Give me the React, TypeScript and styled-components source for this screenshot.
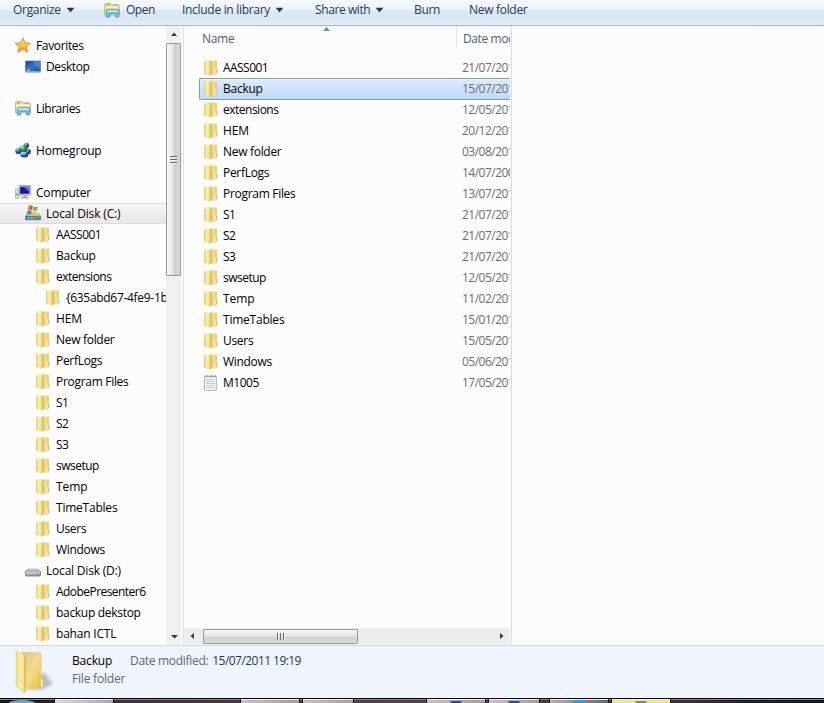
import React from "react";
import styled, { createGlobalStyle } from "styled-components";

const Global = createGlobalStyle`
  * { box-sizing: border-box; }
  body { margin: 0; overflow: hidden; }
  svg { display: block; flex: none; }
`;

const Window = styled.div`
  width: 824px;
  height: 703px;
  display: flex;
  flex-direction: column;
  background: #fcfcfc;
  font: 12px "Open Sans", "Noto Sans", sans-serif;
  color: #000;
  overflow: hidden;
`;

const Toolbar = styled.header`
  height: 26px;
  flex: none;
  display: flex;
  align-items: center;
  padding: 0 0 5px 13px;
  background: linear-gradient(#f6fafe 0, #e9f2fb 10px, #dce7f5 11px, #dce7f5 20px, #e6eff9 25px);
  border-bottom: 1px solid #a2b5cf;
  color: #1e395b;
`;

const Command = styled.button<{ $width: number }>`
  width: ${(p) => p.$width}px;
  height: 20px;
  padding: 0;
  border: 0;
  background: none;
  display: flex;
  align-items: center;
  gap: 5px;
  color: inherit;
  font: inherit;
  flex: none;
`;

const Text = styled.span<{ $track?: number }>`
  white-space: pre;
  line-height: 18px;
  letter-spacing: ${(p) => p.$track ?? -0.3}px;
`;

const Main = styled.main`
  height: 619px;
  flex: none;
  display: grid;
  grid-template-columns: 166px 17px 329px 1fr;
`;

const Tree = styled.nav`
  padding-top: 9px;
  overflow: hidden;
`;

const TreeRow = styled.div<{ $indent: number; $active?: boolean }>`
  height: 21px;
  display: flex;
  align-items: center;
  gap: ${(p) => (p.$indent > 30 ? 5 : 4)}px;
  padding-left: ${(p) => p.$indent}px;
  overflow: hidden;
  ${(p) =>
    p.$active
      ? "background: linear-gradient(#f7f7f7, #e7e7e7); box-shadow: inset 0 1px #dadddc, inset 0 -1px #dcdcdc;"
      : ""}
`;

const VScroll = styled.div`
  display: flex;
  flex-direction: column;
  justify-content: space-between;
  align-items: center;
  background: #f0f0f0;
  border-right: 2px solid #fafafa;
  padding: 5px 0 5px;
`;

const VThumb = styled.div`
  width: 15px;
  height: 233px;
  margin-top: 4px;
  border: 1px solid #989898;
  border-radius: 1px;
  background: linear-gradient(90deg, #f7f7f7, #e7e7e7 45%, #cdcdce 60%, #dadadc);
  display: flex;
  align-items: center;
  justify-content: center;
`;

const Group = styled.div`
  display: flex;
  flex-direction: column;
  align-items: center;
`;

const FilePane = styled.section`
  border-left: 1px solid #d9e3ee;
  border-right: 1px solid #d0dded;
  padding-right: 1px;
  display: flex;
  flex-direction: column;
  overflow: hidden;
`;

const Header = styled.div`
  height: 31px;
  display: grid;
  grid-template-columns: 272px 1fr;
  color: #4c607a;
`;

const HeadCell = styled.div<{ $pad: number }>`
  position: relative;
  height: 22px;
  padding: 4px 0 0 ${(p) => p.$pad}px;
  white-space: nowrap;
  overflow: hidden;
  & + & { border-left: 1px solid #e0e6f0; }
`;

const SortMark = styled.svg`
  position: absolute;
  left: 138px;
  top: 1px;
`;

const FileRow = styled.div<{ $active?: boolean }>`
  height: 21px;
  margin-left: 15px;
  padding-left: ${(p) => (p.$active ? 3 : 4)}px;
  display: grid;
  grid-template-columns: 20px 239px 1fr;
  align-items: center;
  overflow: hidden;
  ${(p) =>
    p.$active
      ? "height: 22px; margin-bottom: -1px; border: 1px solid #7b9ebe; border-right: 0; border-radius: 2px 0 0 2px; background: linear-gradient(#deebfc, #bfd9f9); box-shadow: inset 0 1px #edf5ff;"
      : ""}
`;

const DateText = styled(Text)`
  color: #6d6d6d;
  overflow: hidden;
`;

const HScroll = styled.div`
  margin-top: auto;
  height: 17px;
  padding: 1px 5px;
  background: #ededed;
  border-bottom: 1px solid #f4f4f4;
  display: flex;
  align-items: center;
  justify-content: space-between;
`;

const HThumb = styled.div`
  width: 155px;
  height: 15px;
  margin-left: 6px;
  border: 1px solid #989898;
  border-radius: 1px;
  background: linear-gradient(#f5f5f5, #e8e8e8 45%, #d2d2d2 55%, #dadada);
  display: flex;
  align-items: center;
  justify-content: center;
`;

const ThumbArea = styled.div`
  display: flex;
  align-items: center;
`;

const Details = styled.footer`
  height: 53px;
  flex: none;
  display: flex;
  padding: 3px 0 0 14px;
  gap: 18px;
  background: #f0f4fc;
  border-top: 1px solid #cbdbea;
`;

const DetailText = styled.div`
  padding-top: 3px;
  color: #5a6779;
`;

const DetailLine = styled.div`
  display: flex;
  height: 18px;
`;

const Title = styled(Text)`
  width: 58px;
  color: #000;
`;

const Value = styled(Text)`
  margin-left: 4px;
  color: #1e395b;
`;

const Taskbar = styled.div`
  height: 5px;
  flex: none;
  display: flex;
  border-top: 1px solid #08050a;
  background: linear-gradient(90deg, #101820, #403038 120px, #54404a 400px, #3a2c34 700px, #222228 740px, #10171d);
  box-shadow: inset 0 1px #8d828a;
`;

const Task = styled.div<{ $gap: number; $width: number; $tint: string }>`
  width: ${(p) => p.$width}px;
  margin-left: ${(p) => p.$gap}px;
  background: ${(p) => p.$tint};
  border: 1px solid #1b1518;
  border-bottom: 0;
  border-top: 0;
  box-shadow: inset 0 1px #f3eef0;
  display: flex;
  justify-content: center;
  align-items: flex-end;
  flex: none;
`;

const StartOrb = styled.div`
  width: 26px;
  height: 3px;
  margin: 1px 0 0 9px;
  border-radius: 13px 13px 0 0 / 3px 3px 0 0;
  background: #6da6c4;
  flex: none;
`;

const Dot = styled.i<{ $color: string }>`
  width: 12px;
  height: 2px;
  border-radius: 6px 6px 0 0;
  background: ${(p) => p.$color};
`;

const FolderIcon = () => (
  <svg width="16" height="18" viewBox="0 0 16 18">
    <path d="M6.5 1.6H13q.8 0 .8.8v12.4q0 .6-.8.6H6.5z" fill="url(#foldBack)" />
    <path d="M1 1.8l1-.6h4.6l1.3 1v14.1l-1.2.5L1 15z" fill="url(#foldFront)" />
    <path d="M1.3 2.3l5.2.6" stroke="#fbf5cd" strokeWidth=".8" />
    <path d="M7.9 3v12.6" stroke="#cdb04a" strokeWidth=".8" />
    <path d="M12 9.3h1.8q.5 0 .5.6v4.4l-.8.6H12z" fill="#f4ecc0" />
    <path d="M13.8 9.8v4.4" stroke="#9fabab" strokeWidth=".9" />
  </svg>
);

const Defs = () => (
  <svg width="0" height="0">
    <defs>
      <linearGradient id="foldFront">
        <stop stopColor="#e3cd70" />
        <stop offset=".4" stopColor="#f8eeb2" />
        <stop offset=".75" stopColor="#f1e08f" />
        <stop offset="1" stopColor="#dfc45c" />
      </linearGradient>
      <linearGradient id="foldBack">
        <stop stopColor="#dcc257" />
        <stop offset=".6" stopColor="#f3e193" />
        <stop offset="1" stopColor="#ddc25a" />
      </linearGradient>
      <linearGradient id="starFill" x2="0" y2="1">
        <stop stopColor="#fff4a2" />
        <stop offset=".5" stopColor="#fdcb3b" />
        <stop offset="1" stopColor="#f08a18" />
      </linearGradient>
      <linearGradient id="screen" x2="1" y2="1">
        <stop stopColor="#174193" />
        <stop offset=".5" stopColor="#3278c7" />
        <stop offset="1" stopColor="#1b4e94" />
      </linearGradient>
      <linearGradient id="metal" x2="0" y2="1">
        <stop stopColor="#e6e9eb" />
        <stop offset="1" stopColor="#8e9498" />
      </linearGradient>
      <radialGradient id="ballBlue" cx=".35" cy=".25">
        <stop stopColor="#d6ebff" />
        <stop offset=".5" stopColor="#4a80d2" />
        <stop offset="1" stopColor="#20409c" />
      </radialGradient>
      <radialGradient id="ballGreen" cx=".35" cy=".25">
        <stop stopColor="#d5fac0" />
        <stop offset=".5" stopColor="#45b045" />
        <stop offset="1" stopColor="#1b7a2a" />
      </radialGradient>
      <linearGradient id="bigFront">
        <stop stopColor="#f4df83" />
        <stop offset=".7" stopColor="#fbeeaa" />
        <stop offset="1" stopColor="#e6c95f" />
      </linearGradient>
      <linearGradient id="bigBack" x2="1" y2="1">
        <stop stopColor="#d9c88e" />
        <stop offset=".5" stopColor="#f0dc8c" />
        <stop offset="1" stopColor="#e7bd33" />
      </linearGradient>
      <filter id="soft"><feGaussianBlur stdDeviation="1.8" /></filter>
    </defs>
  </svg>
);

const StarIcon = () => (
  <svg width="17" height="17" viewBox="0 0 17 17">
    <path d="M7.8.8l2 5.1 5.7.4-4.4 3.5 1.6 5.5-4.9-3.1-4.9 3.1 1.5-5.5L.1 6.3l5.6-.4z" fill="url(#starFill)" stroke="#df8430" strokeWidth=".9" />
  </svg>
);

const DesktopIcon = () => (
  <svg width="17" height="16" viewBox="0 0 17 16">
    <path d="M.6 2h14.8v11H.6z" fill="url(#screen)" stroke="#597a9d" strokeWidth=".8" />
    <path d="M8 2.5h7v7L12 8z" fill="#5595d4" opacity=".65" />
    <path d="M.5 13h15" stroke="#aec2ce" strokeWidth="1.3" />
    <path d="M1.5 12l3-3v3z" fill="#9ecfe9" />
  </svg>
);

const LibraryIcon = () => (
  <svg width="17" height="17" viewBox="0 0 17 17">
    <path d="M.5 13V2.5l1-1h5L8 2.7h6.5l1 1V13z" fill="#efdc88" stroke="#c8ae57" strokeWidth=".8" />
    <path d="M1.5 4h13v4h-13z" fill="#f8efb8" />
    <path d="M2 3h3" stroke="#69ad63" />
    <path d="M9 3.6h5" stroke="#9eb9c2" />
    <path d="M2.3 15V9q0-1.8 1.7-1.8h9q1.8 0 1.8 1.8v6h-3.2v-3.6H5.8V15z" fill="#6cc2eb" stroke="#3a8fbf" strokeWidth=".7" />
    <path d="M3.3 8.2h10.4v1.9H3.3z" fill="#bde8fa" />
  </svg>
);

const HomegroupIcon = () => (
  <svg width="17" height="17" viewBox="0 0 17 17">
    <circle cx="11.4" cy="3.4" r="2.7" fill="url(#ballBlue)" />
    <circle cx="3.4" cy="9" r="3.1" fill="url(#ballBlue)" />
    <circle cx="13" cy="9.6" r="2.9" fill="url(#ballBlue)" />
    <ellipse cx="9.4" cy="13" rx="4" ry="2.5" fill="url(#ballBlue)" />
    <circle cx="8.5" cy="7.2" r="3.8" fill="url(#ballGreen)" />
    <path d="M6 11q2.5-1.5 5.4 0" stroke="#c9e6e4" fill="none" />
  </svg>
);

const ComputerIcon = () => (
  <svg width="17" height="17" viewBox="0 0 17 17">
    <path d="M.6 5h2.8v9.4H.6z" fill="#dee8df" stroke="#93a196" strokeWidth=".7" />
    <path d="M1.3 9.5h1.3v2H1.3z" fill="#49ac4f" />
    <path d="M4 1.5h11.4v9.6H4z" fill="#d9dedf" stroke="#8c9598" strokeWidth=".8" />
    <path d="M5.1 2.7h9.2v7.1H5.1z" fill="#111ca0" />
    <path d="M8.5 2.7h5.8v5z" fill="#5276df" />
    <path d="M8.2 11h3.6v2H8.2zM6 13h7.8v1.6H6z" fill="#a9afb1" />
  </svg>
);

const DiskIcon = ({ system = false }: { system?: boolean }) => (
  <svg width="17" height="17" viewBox="0 0 17 17">
    <path d={system ? "M2.2 8.6h11.5l1.9 3.5H.4z" : "M2.8 7.2h10.4l2.2 3H.5z"} fill="#dfe3e5" stroke="#888e90" strokeWidth=".7" />
    <path d={system ? "M.4 11h15.2v3.8H.4z" : "M.5 9.8q0-.8.8-.8h13.4q.8 0 .8.8v3.4q0 .8-.8.8H1.3q-.8 0-.8-.8z"} fill={system ? "#5b8993" : "url(#metal)"} stroke="#636d70" strokeWidth=".7" />
    <path d="M12 11.8h2.2" stroke="#5cc846" strokeWidth="1.7" />
    {system && (
      <g>
        <path d="M2.5 13h7" stroke="#a3c5ca" />
        <path d="M3.7.9q2.4-1.2 4.2 0L7 5q-2-1.2-4.2 0z" fill="#e6602f" />
        <path d="M8.5 1.4q2 1.1 4.4 0L11.9 5.4q-2.2.9-4.3 0z" fill="#78b83b" />
        <path d="M2.6 5.8q2.2-1.2 4.2 0l-.9 4q-2-1.1-4.2 0z" fill="#4384d1" />
        <path d="M7.4 6.2q2 1 4.3 0l-.9 4q-2.2 1-4.3 0z" fill="#f4c33d" />
      </g>
    )}
  </svg>
);

const NoteIcon = () => (
  <svg width="16" height="18" viewBox="0 0 16 18">
    <path d="M1.5 2.5h11.9v13.8H1.5z" fill="#f5f7f8" stroke="#9ca4a9" strokeWidth=".8" />
    <path d="M3 5.5h9M3 7.5h9M3 9.5h9M3 11.5h9M3 13.5h9" stroke="#b6cbd6" strokeWidth=".9" />
    <path d="M2.7 1v2.4M4.7 1v2.4M6.7 1v2.4M8.7 1v2.4M10.7 1v2.4M12.4 1v2.4" stroke="#8a9296" strokeWidth=".8" />
  </svg>
);

const BigFolder = () => (
  <svg width="40" height="46" viewBox="0 0 40 46">
    <path d="M14 40l16-17 9 12-12 6z" fill="#9ca3ad" opacity=".65" filter="url(#soft)" />
    <path d="M8 3h18l2 1.8-1.2 33.4L12 41z" fill="url(#bigBack)" />
    <path d="M2 1.8l9 5V43l-1.5.6L3 37.6 2 36z" fill="url(#bigFront)" stroke="#deca7b" strokeWidth=".6" />
    <path d="M11 7v36" stroke="#caa83f" strokeWidth=".7" />
    <path d="M26 27q3.5-.5 3.5 2.5V37l-3 2z" fill="#ead27a" stroke="#c7a947" strokeWidth=".5" />
    <path d="M27.6 31v7" stroke="#fffbdc" strokeWidth="1.6" />
  </svg>
);

const Arrow = ({ d }: { d: string }) => (
  <svg width="8" height="8" viewBox="0 0 8 8"><path d={d} fill="#35383b" /></svg>
);

const Caret = () => (
  <svg width="9" height="6" viewBox="0 0 9 6"><path d="M.5.7h8L4.5 5.2z" fill="#1e395b" /></svg>
);

const Grip = ({ vertical = false }: { vertical?: boolean }) => (
  <svg width="9" height="9" viewBox="0 0 9 9">
    <path d={vertical ? "M1 1.5h7M1 4.5h7M1 7.5h7" : "M1.5 1v7M4.5 1v7M7.5 1v7"} stroke="#63666a" />
    <path d={vertical ? "M1 2.5h7M1 5.5h7M1 8.5h7" : "M2.5 1v7M5.5 1v7M8.5 1v7"} stroke="#f8f8f8" />
  </svg>
);

const tracking: Record<string, number> = {
  AASS001: -0.55,
  extensions: -0.5,
  Libraries: -0.5,
  Favorites: -0.35,
  Desktop: -0.4,
  AdobePresenter6: -0.55,
  Homegroup: -0.2,
  HEM: -0.15,
  Temp: -0.1,
  "Local Disk (C:)": -0.15,
  "Local Disk (D:)": -0.2,
  swsetup: -0.5,
  M1005: -0.5,
  S1: -0.6,
  S2: -0.6,
  S3: -0.6,
  TimeTables: -0.22,
  Backup: -0.25,
  Computer: -0.2,
  "bahan ICTL": -0.2,
};

type TreeItem = [string, number, React.ReactNode];
const folder = (name: string): TreeItem => [name, 35, <FolderIcon />];

const tree: (TreeItem | null)[] = [
  ["Favorites", 15, <StarIcon />],
  ["Desktop", 25, <DesktopIcon />],
  null,
  ["Libraries", 15, <LibraryIcon />],
  null,
  ["Homegroup", 15, <HomegroupIcon />],
  null,
  ["Computer", 15, <ComputerIcon />],
  ["Local Disk (C:)", 25, <DiskIcon system />],
  folder("AASS001"),
  folder("Backup"),
  folder("extensions"),
  ["{635abd67-4fe9-1b", 45, <FolderIcon />],
  ...["HEM", "New folder", "PerfLogs", "Program Files", "S1", "S2", "S3", "swsetup", "Temp", "TimeTables", "Users", "Windows"].map(folder),
  ["Local Disk (D:)", 25, <DiskIcon />],
  folder("AdobePresenter6"),
  folder("backup dekstop"),
  folder("bahan ICTL"),
];

const files: [string, string][] = [
  ["AASS001", "21/07/2011"],
  ["Backup", "15/07/2011"],
  ["extensions", "12/05/2011"],
  ["HEM", "20/12/2010"],
  ["New folder", "03/08/2011"],
  ["PerfLogs", "14/07/2009"],
  ["Program Files", "13/07/2011"],
  ["S1", "21/07/2011"],
  ["S2", "21/07/2011"],
  ["S3", "21/07/2011"],
  ["swsetup", "12/05/2011"],
  ["Temp", "11/02/2011"],
  ["TimeTables", "15/01/2011"],
  ["Users", "15/05/2011"],
  ["Windows", "05/06/2011"],
  ["M1005", "17/05/2011"],
];

const glass = "linear-gradient(90deg, #c9bfc4, #a79ba2)";
const tasks: [number, number, string, string?][] = [
  [19, 60, "linear-gradient(90deg, #dedada, #aaa4a7)"],
  [126, 60, glass],
  [2, 52, glass],
  [72, 60, glass, "#25548d"],
  [2, 52, glass, "#25548d"],
  [9, 60, "linear-gradient(90deg, #b0b1b2, #66676a)", "#18a2ed"],
  [2, 60, "#f2e583", "#8b8560"],
];

export default function App() {
  return (
    <Window>
      <Global />
      <Toolbar>
        <Command $width={91}><Text>Organize</Text><Caret /></Command>
        <Command $width={78}><LibraryIcon /><Text $track={-0.5}>Open</Text></Command>
        <Command $width={133}><Text>Include in library</Text><Caret /></Command>
        <Command $width={99}><Text $track={-0.4}>Share with</Text><Caret /></Command>
        <Command $width={55}><Text>Burn</Text></Command>
        <Command $width={70}><Text>New folder</Text></Command>
      </Toolbar>
      <Main>
        <Tree>
          {tree.map((item, i) =>
            item ? (
              <TreeRow key={i} $indent={item[1]} $active={item[0] === "Local Disk (C:)"}>
                {item[2]}
                <Text $track={tracking[item[0]]}>{item[0]}</Text>
              </TreeRow>
            ) : (
              <TreeRow key={i} $indent={0} />
            )
          )}
        </Tree>
        <VScroll>
          <Group>
            <Arrow d="M4 1.5L7 5H1z" />
            <VThumb><Grip vertical /></VThumb>
          </Group>
          <Arrow d="M1 3h7L4.5 6.5z" />
        </VScroll>
        <FilePane>
          <Header>
            <HeadCell $pad={18}>
              <Text>Name</Text>
              <SortMark width="9" height="5" viewBox="0 0 9 5"><path d="M4.5 0L8 4H1z" fill="#5c91ad" /></SortMark>
            </HeadCell>
            <HeadCell $pad={6}><Text $track={-0.4}>Date modified</Text></HeadCell>
          </Header>
          {files.map(([name, date]) => (
            <FileRow key={name} $active={name === "Backup"}>
              {name === "M1005" ? <NoteIcon /> : <FolderIcon />}
              <Text $track={tracking[name]}>{name}</Text>
              <DateText $track={-0.52}>{date}</DateText>
            </FileRow>
          ))}
          <HScroll>
            <ThumbArea>
              <Arrow d="M5 1v6L1.5 4z" />
              <HThumb><Grip /></HThumb>
            </ThumbArea>
            <Arrow d="M3 1v6l3.5-3z" />
          </HScroll>
        </FilePane>
        <section />
      </Main>
      <Details>
        <BigFolder />
        <DetailText>
          <DetailLine>
            <Title $track={-0.15}>Backup</Title>
            <Text>Date modified:</Text>
            <Value $track={-0.55}>15/07/2011 19:19</Value>
          </DetailLine>
          <DetailLine><Text $track={-0.2}>File folder</Text></DetailLine>
        </DetailText>
      </Details>
      <Taskbar>
        <StartOrb />
        {tasks.map(([gap, width, tint, dot], i) => (
          <Task key={i} $gap={gap} $width={width} $tint={tint}>{dot && <Dot $color={dot} />}</Task>
        ))}
      </Taskbar>
      <Defs />
    </Window>
  );
}
